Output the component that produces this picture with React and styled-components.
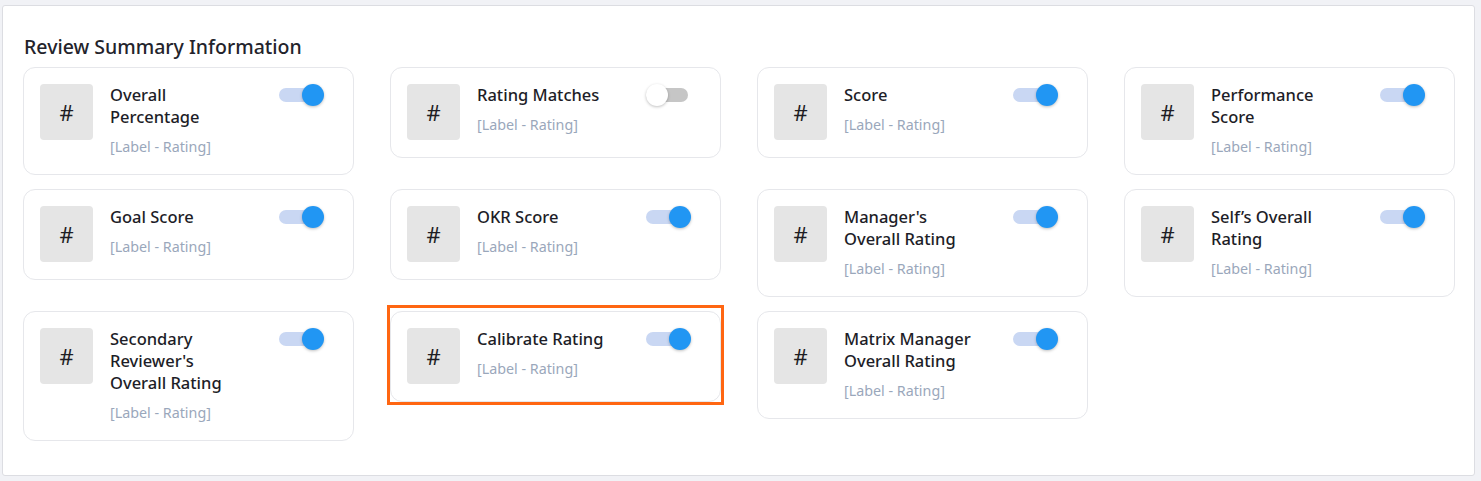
import React from 'react'
import styled, { createGlobalStyle } from 'styled-components'

const GlobalStyle = createGlobalStyle`
  body {
    margin: 0;
    background: #f1f2f6;
    font-family: 'Noto Sans', 'Open Sans', sans-serif;
  }
`

const fields = [
  { title: 'Overall Percentage', on: true },
  { title: 'Rating Matches', on: false },
  { title: 'Score', on: true },
  { title: 'Performance Score', on: true },
  { title: 'Goal Score', on: true },
  { title: 'OKR Score', on: true },
  { title: "Manager's Overall Rating", on: true },
  { title: 'Self’s Overall Rating', on: true },
  { title: "Secondary Reviewer's Overall Rating", on: true },
  { title: 'Calibrate Rating', on: true, highlighted: true },
  { title: 'Matrix Manager Overall Rating', on: true },
]

const Page = styled.div`
  padding: 5px 6px 5px 2px;
`

const Panel = styled.section`
  background: #fff;
  border: 1px solid #dcdde2;
  border-radius: 3px;
  padding: 28px 19px 34px 20px;
`

const Heading = styled.h2`
  margin: 0 0 7px 1px;
  font-size: 19.5px;
  line-height: 26px;
  font-weight: 500;
  color: #23232b;
`

const Grid = styled.div`
  display: grid;
  grid-template-columns: repeat(4, 1fr);
  column-gap: 36px;
  row-gap: 14px;
  align-items: start;
`

const Card = styled.div`
  position: relative;
  display: flex;
  align-items: flex-start;
  padding: 16px 16px 17px;
  border: 1px solid #e6e7eb;
  border-radius: 12px;
  background: #fff;

  ${p =>
    p.highlighted &&
    `
    &::after {
      content: '';
      position: absolute;
      top: -7px;
      left: -4px;
      right: -4px;
      bottom: -4px;
      border: 3px solid #ff6612;
      pointer-events: none;
    }
  `}
`

const IconBox = styled.div`
  flex: 0 0 53px;
  height: 56px;
  display: flex;
  align-items: center;
  justify-content: center;
  background: #e5e5e5;
  border-radius: 4px;
  margin-right: 17px;
  font-size: 22px;
  color: #1e1e24;
`

const Info = styled.div`
  width: 140px;
`

const Title = styled.div`
  font-size: 16.5px;
  line-height: 22px;
  font-weight: 500;
  color: #1d1d27;
`

const Sub = styled.div`
  margin-top: 9px;
  font-size: 14.3px;
  line-height: 20px;
  color: #9aa7bb;
`

const Switch = styled.div`
  position: relative;
  flex: 0 0 45px;
  height: 22px;
  margin-left: auto;
  margin-right: 13px;
`

const Track = styled.div`
  margin-top: 4px;
  width: 42px;
  height: 14px;
  border-radius: 7px;
  background: ${p => (p.on ? '#c9d7f3' : '#c6c6c6')};
`

const Knob = styled.div`
  position: absolute;
  top: 0;
  left: ${p => (p.on ? '23px' : '0')};
  width: 22px;
  height: 22px;
  border-radius: 50%;
  background: ${p => (p.on ? '#2196f3' : '#fff')};
  box-shadow: 0 1px 3px rgba(0, 0, 0, 0.25);
`

const FieldCard = ({ title, on, highlighted }) => (
  <Card highlighted={highlighted}>
    <IconBox>#</IconBox>
    <Info>
      <Title>{title}</Title>
      <Sub>[Label - Rating]</Sub>
    </Info>
    <Switch>
      <Track on={on} />
      <Knob on={on} />
    </Switch>
  </Card>
)

export default function App() {
  return (
    <Page>
      <GlobalStyle />
      <Panel>
        <Heading>Review Summary Information</Heading>
        <Grid>
          {fields.map(f => (
            <FieldCard key={f.title} {...f} />
          ))}
        </Grid>
      </Panel>
    </Page>
  )
}
